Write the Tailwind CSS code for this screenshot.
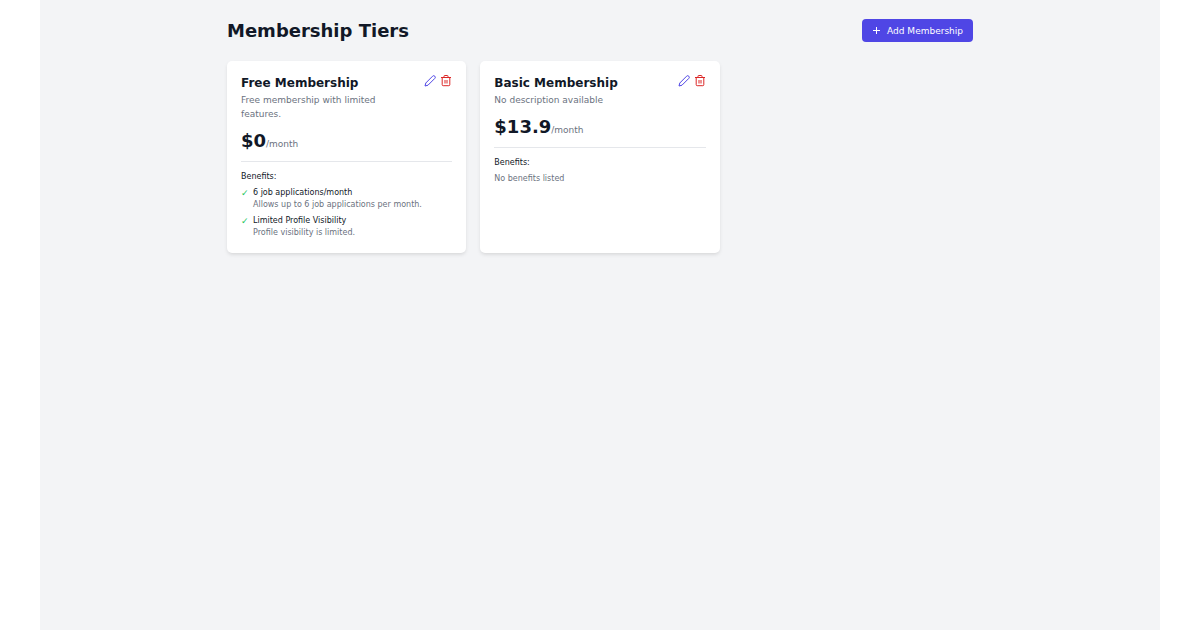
<!DOCTYPE html>
<html lang="en">

<head>
    <meta charset="UTF-8">
    <meta name="viewport" content="width=device-width, initial-scale=1.0">
    <title>Membership Tiers</title>
    <script src="https://cdn.jsdelivr.net/npm/@tailwindcss/browser@4"></script>
</head>

<body class="bg-white font-['DejaVu_Sans',sans-serif] text-[#111827]">

    <div class="mx-10 min-h-screen bg-[#f3f4f6]">
        <main class="mx-auto max-w-[746px] pt-[19px] pb-5">
            <!-- Page header -->
            <header class="flex items-center justify-between mb-[19px]">
                <h1 class="text-[18px] leading-[20px] font-bold">Membership Tiers</h1>
                <button type="button" class="flex items-center gap-[5px] rounded-[4px] bg-[#4f46e5] px-[10px] h-[23px] text-[9px] leading-[14px] text-white hover:bg-[#4338ca]">
                    <svg class="size-[10px]" viewBox="0 0 10 10" fill="none" stroke="currentColor" aria-hidden="true">
                        <path d="M4.5 1v7M1 4.5h7" />
                    </svg>
                    Add Membership
                </button>
            </header>

            <div class="grid grid-cols-3 gap-[14px]">
                <!-- Free tier -->
                <article class="rounded-[5px] bg-white p-[14px] shadow-[0_2px_4px_-1px_rgb(0_0_0/0.15)]">
                    <div class="flex items-start justify-between gap-2">
                        <div>
                            <h2 class="text-[12px] leading-[16px] font-bold">Free Membership</h2>
                            <p class="mt-[2px] text-[9px] leading-[14px] text-[#6b7280]">Free membership with limited features.</p>
                        </div>
                        <div class="flex shrink-0 gap-1">
                            <button type="button" aria-label="Edit Free Membership" class="text-[#4f46e5]">
                                <svg class="size-3" viewBox="0 0 12 12" fill="none" stroke="currentColor" stroke-linejoin="round">
                                    <path d="M1 11l.8-3L8.6 1.2a1.5 1.5 0 012.2 2.2L4 10.2z" />
                                </svg>
                            </button>
                            <button type="button" aria-label="Delete Free Membership" class="text-[#dc2626]">
                                <svg class="size-3" viewBox="0 0 12 12" fill="none" stroke="currentColor" stroke-linejoin="round">
                                    <path d="M1 2.5h10M4 2.5V1.2q0-.7.7-.7h2.6q.7 0 .7.7v1.3M2.2 2.5v7.2q0 1 1 1h5.6q1 0 1-1V2.5M5 5v3.5M7 5v3.5" />
                                </svg>
                            </button>
                        </div>
                    </div>
                    <p class="mt-[9px] text-[9px] leading-[21px] text-[#6b7280]"><span class="text-[18px] font-bold text-[#111827]">$0</span>/month</p>
                    <div class="mt-[6px] border-t border-[#e5e7eb] pt-[9px]">
                        <h3 class="text-[8px] leading-[12px]">Benefits:</h3>
                        <ul class="mt-1 space-y-1 text-[8px] leading-[12px]">
                            <li class="flex gap-1">
                                <span class="w-2 text-[9px] text-[#22c55e]">✓</span>
                                <div>
                                    <p>6 job applications/month</p>
                                    <p class="text-[#6b7280]">Allows up to 6 job applications per month.</p>
                                </div>
                            </li>
                            <li class="flex gap-1">
                                <span class="w-2 text-[9px] text-[#22c55e]">✓</span>
                                <div>
                                    <p>Limited Profile Visibility</p>
                                    <p class="text-[#6b7280]">Profile visibility is limited.</p>
                                </div>
                            </li>
                        </ul>
                    </div>
                </article>

                <!-- Basic tier -->
                <article class="rounded-[5px] bg-white p-[14px] shadow-[0_2px_4px_-1px_rgb(0_0_0/0.15)]">
                    <div class="flex items-start justify-between gap-2">
                        <div>
                            <h2 class="text-[12px] leading-[16px] font-bold">Basic Membership</h2>
                            <p class="mt-[2px] text-[9px] leading-[14px] text-[#6b7280]">No description available</p>
                        </div>
                        <div class="flex shrink-0 gap-1">
                            <button type="button" aria-label="Edit Basic Membership" class="text-[#4f46e5]">
                                <svg class="size-3" viewBox="0 0 12 12" fill="none" stroke="currentColor" stroke-linejoin="round">
                                    <path d="M1 11l.8-3L8.6 1.2a1.5 1.5 0 012.2 2.2L4 10.2z" />
                                </svg>
                            </button>
                            <button type="button" aria-label="Delete Basic Membership" class="text-[#dc2626]">
                                <svg class="size-3" viewBox="0 0 12 12" fill="none" stroke="currentColor" stroke-linejoin="round">
                                    <path d="M1 2.5h10M4 2.5V1.2q0-.7.7-.7h2.6q.7 0 .7.7v1.3M2.2 2.5v7.2q0 1 1 1h5.6q1 0 1-1V2.5M5 5v3.5M7 5v3.5" />
                                </svg>
                            </button>
                        </div>
                    </div>
                    <p class="mt-[9px] text-[9px] leading-[21px] text-[#6b7280]"><span class="text-[18px] font-bold text-[#111827]">$13.9</span>/month</p>
                    <div class="mt-[6px] border-t border-[#e5e7eb] pt-[9px]">
                        <h3 class="text-[8px] leading-[12px]">Benefits:</h3>
                        <p class="mt-1 text-[8px] leading-[12px] text-[#6b7280]">No benefits listed</p>
                    </div>
                </article>
            </div>
        </main>
    </div>

</body>

</html>
